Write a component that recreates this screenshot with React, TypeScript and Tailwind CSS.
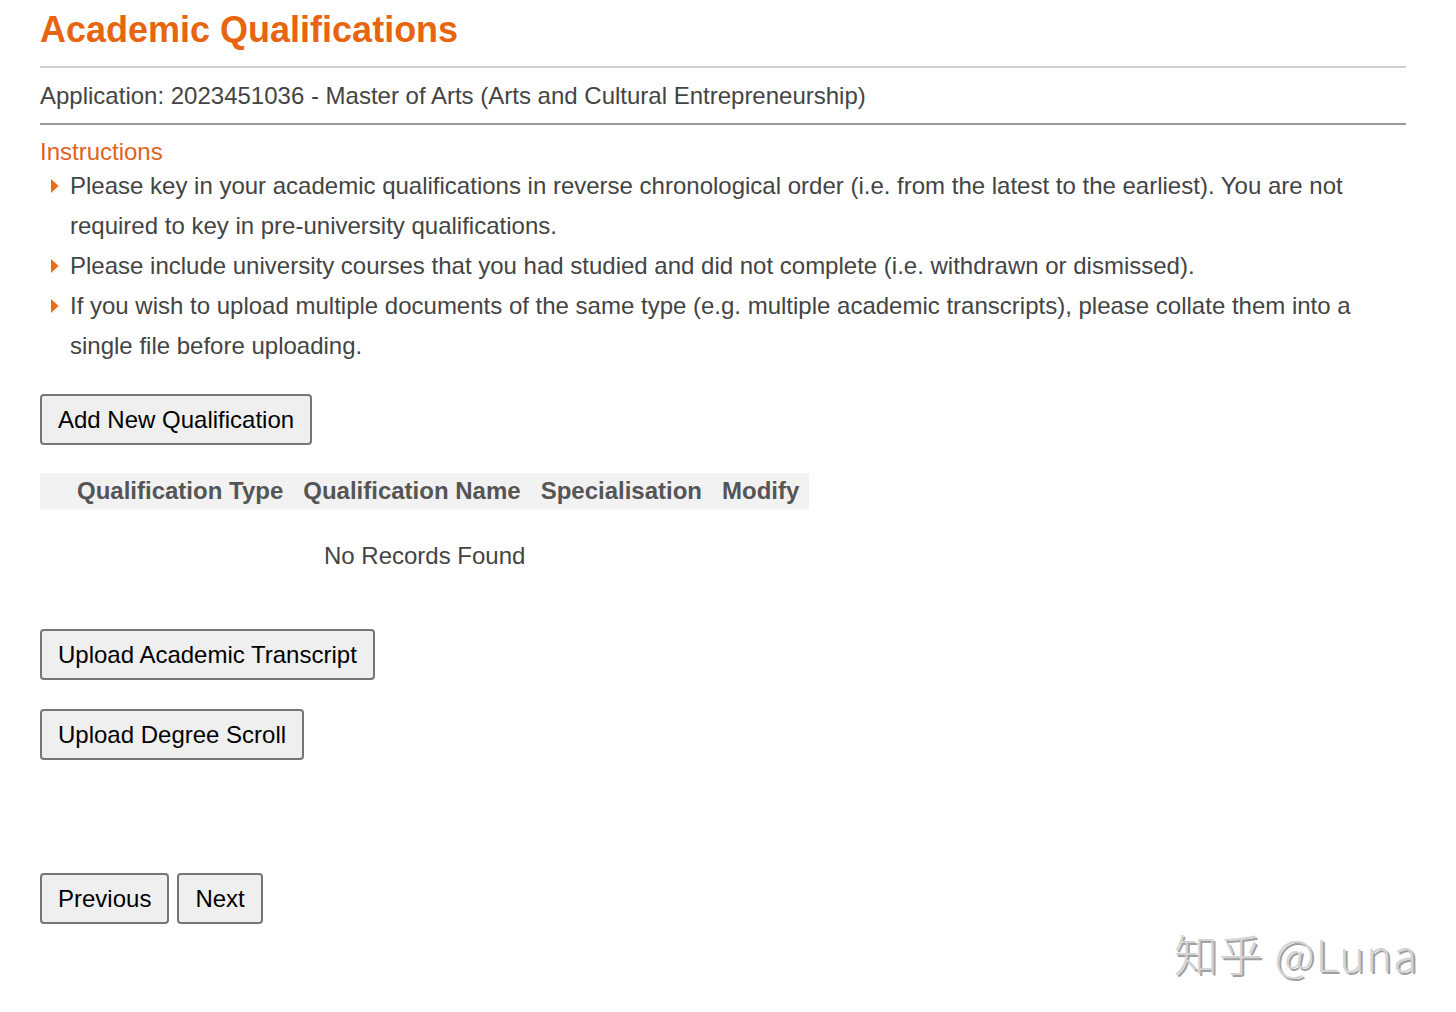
const Bullet = () => (
  <svg width="9" height="16" viewBox="0 0 9 16" className="mt-[12px] shrink-0">
    <path d="M1 1 L8.5 8 L1 15 Z" fill="#ec6a12" />
  </svg>
);

const Btn = ({ children }: { children: React.ReactNode }) => (
  <button className="h-[51px] px-[16px] rounded-[4px] border-2 border-[#767676] bg-[#efefef] text-[24px] text-black leading-none">
    {children}
  </button>
);

const instructions = [
  'Please key in your academic qualifications in reverse chronological order (i.e. from the latest to the earliest). You are not required to key in pre-university qualifications.',
  'Please include university courses that you had studied and did not complete (i.e. withdrawn or dismissed).',
  'If you wish to upload multiple documents of the same type (e.g. multiple academic transcripts), please collate them into a single file before uploading.',
];

export default function App() {
  return (
    <div className="relative min-h-[1012px] bg-white pl-10 pr-[50px] pt-[8px] font-['Liberation_Sans',Arial,sans-serif] text-[#444]">
      {/* Title */}
      <h1 className="text-[36px] font-bold text-[#e8650f] leading-[44px]">Academic Qualifications</h1>
      <div className="mt-[14px] border-t-2 border-[#cfcfcf]" />
      <div className="h-[55px] pt-[1px] flex items-center text-[24px]">
        Application: 2023451036 - Master of Arts (Arts and Cultural Entrepreneurship)
      </div>
      <div className="border-t-2 border-[#9a9a9a]" />

      {/* Instructions */}
      <div className="mt-[12px] text-[24px] leading-[30px] text-[#e0631a]">Instructions</div>
      <ul className="-mt-[1px] pl-[10px]">
        {instructions.map((t) => (
          <li key={t} className="flex gap-[11px] text-[24px] leading-[40px]">
            <Bullet />
            <span>{t}</span>
          </li>
        ))}
      </ul>

      <div className="mt-[28px]">
        <Btn>Add New Qualification</Btn>
      </div>

      {/* Table */}
      <table className="mt-[28px] border-collapse text-[24px]">
        <thead>
          <tr className="bg-[#f2f2f2] h-[36px]">
            <th className="w-[27px] p-0" />
            <th className="px-[10px] font-bold text-[#555] text-left">Qualification Type</th>
            <th className="px-[10px] font-bold text-[#555] text-left">Qualification Name</th>
            <th className="px-[10px] font-bold text-[#555] text-left">Specialisation</th>
            <th className="px-[10px] font-bold text-[#555] text-left">Modify</th>
          </tr>
        </thead>
        <tbody>
          <tr>
            <td colSpan={5} className="h-[93px] text-center align-middle text-[#444]">
              No Records Found
            </td>
          </tr>
        </tbody>
      </table>

      <div className="mt-[27px] flex flex-col items-start gap-[29px]">
        <Btn>Upload Academic Transcript</Btn>
        <Btn>Upload Degree Scroll</Btn>
      </div>

      <div className="mt-[113px] flex gap-[8px]">
        <Btn>Previous</Btn>
        <Btn>Next</Btn>
      </div>

      {/* watermark */}
      <div className="absolute right-[38px] top-[920px] text-[44px] text-[#d4d4d4] font-['Noto_Sans_CJK_SC',sans-serif] font-light [text-shadow:2px_2px_0_#a0a0a0] tracking-[1px]">
        知乎 @Luna
      </div>
    </div>
  );
}
